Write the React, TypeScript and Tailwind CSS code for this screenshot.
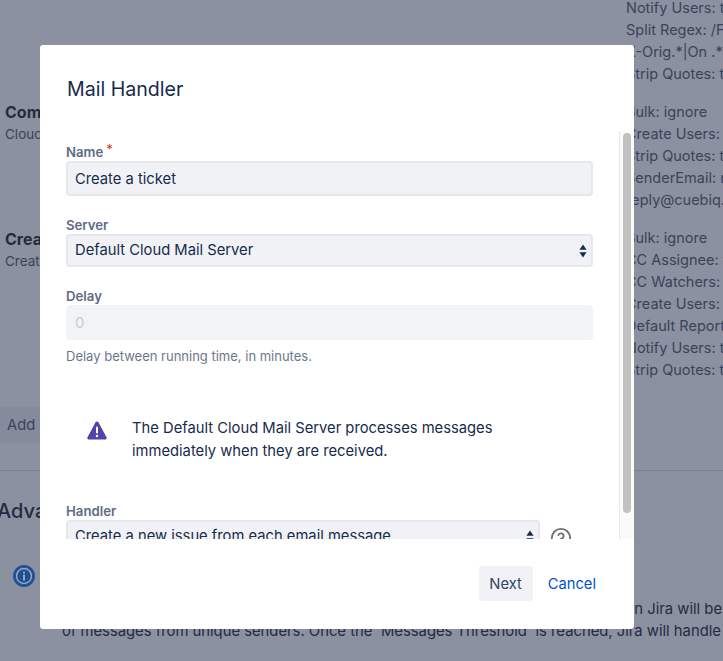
import { CircleHelp } from "lucide-react";

const fontClass = "font-['Inter','Noto_Sans',sans-serif]";

function SelectArrows() {
  return (
    <svg width="8" height="14" viewBox="0 0 8 14" className="pointer-events-none text-[#172b4d]">
      <path d="M4 0.5 L7.6 5.8 H0.4 Z" fill="currentColor" />
      <path d="M4 13.5 L7.6 8.2 H0.4 Z" fill="currentColor" />
    </svg>
  );
}

function WarningIcon() {
  return (
    <svg width="20" height="19" viewBox="0 0 20 19">
      <path
        d="M8.6 1.2 L0.5 16.2 C-0.1 17.4 0.6 18.6 1.9 18.6 H18.1 C19.4 18.6 20.1 17.4 19.5 16.2 L11.4 1.2 C10.8 0.1 9.2 0.1 8.6 1.2 Z"
        fill="#5243aa"
      />
      <rect x="9" y="5.5" width="2" height="7" rx="1" fill="#fff" />
      <circle cx="10" cy="15" r="1.2" fill="#fff" />
    </svg>
  );
}

function InfoIcon() {
  return (
    <svg width="22" height="22" viewBox="0 0 22 22">
      <circle cx="11" cy="11" r="11" fill="#1f5192" />
      <circle cx="11" cy="11" r="7.5" fill="none" stroke="#9aa6bd" strokeWidth="1.5" />
      <rect x="10" y="9.5" width="2" height="6" fill="#9aa6bd" />
      <circle cx="11" cy="7.5" r="1.1" fill="#9aa6bd" />
    </svg>
  );
}

const rightGroups = [
  ["Notify Users: true", "Split Regex: /From:", "X-Orig.*|On .*(wrote)", "Strip Quotes: true"],
  ["Bulk: ignore", "Create Users: true", "Strip Quotes: true", "SenderEmail: no-", "reply@cuebiq.com"],
  [
    "Bulk: ignore",
    "CC Assignee: true",
    "CC Watchers: true",
    "Create Users: true",
    "Default Reporter: x",
    "Notify Users: true",
    "Strip Quotes: true",
  ],
];

function Background() {
  return (
    <div className="flex h-full flex-col text-[#3b4357]">
      <div className="flex h-[471px] shrink-0 justify-between border-b border-[#7a8195]">
        <div className="flex flex-col pl-[5px] pt-[101px] text-[13.5px] leading-[22px]">
          <div className="text-[16px] font-bold text-[#232b40]">Comment</div>
          <div>Cloud</div>
          <div className="mt-[83px] text-[16px] font-bold text-[#232b40]">Create</div>
          <div>Create</div>
          <div className="-ml-[5px] mt-[135px] h-[36px] w-[100px] overflow-hidden whitespace-nowrap rounded-[3px] bg-[#858b9d] pl-[7px] text-[14.75px] leading-[36px]">
            Add incoming
          </div>
        </div>
        <div className="-mt-[3px] flex w-[97px] flex-col gap-4 overflow-hidden whitespace-nowrap text-[14.5px] leading-[22px]">
          {rightGroups.map((group, i) => (
            <div key={i}>
              {group.map((line, j) => (
                <div key={j}>{line}</div>
              ))}
            </div>
          ))}
        </div>
      </div>
      <div className="-ml-[3px] mt-[25px] text-[20px] font-medium leading-[30px] text-[#232b40]">Advanced</div>
      <div className="mt-[39px] pl-[13px]">
        <InfoIcon />
      </div>
      <div className="mt-[11px] whitespace-nowrap pl-[62px] text-[14.8px] leading-[22px] text-[#232b40]">
        <p>To prevent mail loops, the number of emails received from any one single sender in Jira will be processed</p>
        <p>of messages from unique senders. Once the 'Messages Threshold' is reached, Jira will handle the</p>
      </div>
    </div>
  );
}

function Label({ children }: { children: React.ReactNode }) {
  return <div className="text-[13.2px] font-semibold leading-[16px] text-[#5e6c84]">{children}</div>;
}

const fieldClass =
  "w-full rounded-[4px] border-2 border-[#e6e7ec] bg-[#f1f2f6] px-[7px] text-[14.75px] text-[#172b4d] outline-none";

function Modal() {
  return (
    <div className="absolute left-[40px] top-[45px] flex h-[584px] w-[594px] flex-col rounded-[3px] bg-white">
      <div className="h-[86px] shrink-0 pl-[27px] pt-[29px] text-[19.6px] font-normal leading-[30px] text-[#172b4d]">
        Mail Handler
      </div>
      <div className="flex min-h-0 flex-1">
        <div className="min-w-0 flex-1 overflow-hidden pl-[26px] pr-[26px]">
          <div className="flex items-start pt-[13px]">
            <Label>Name</Label>
            <span className="-mt-[3px] ml-[3px] text-[13px] leading-[16px] text-[#de350b]">*</span>
          </div>
          <input readOnly value="Create a ticket" className={`mt-[1px] block h-[35px] ${fieldClass}`} />

          <div className="mt-[21px]">
            <Label>Server</Label>
          </div>
          <div className="relative mt-[1px]">
            <select className={`block h-[33px] appearance-none ${fieldClass}`}>
              <option>Default Cloud Mail Server</option>
            </select>
            <div className="absolute right-[6px] top-[10px] flex">
              <SelectArrows />
            </div>
          </div>

          <div className="mt-[21px]">
            <Label>Delay</Label>
          </div>
          <input
            readOnly
            value="0"
            className="mt-[1px] block h-[35px] w-full rounded-[4px] bg-[#f2f3f6] px-[9px] text-[14.75px] text-[#c9ccd4] outline-none"
          />
          <div className="mt-[8px] text-[13px] leading-[16px] text-[#6b778c]">
            Delay between running time, in minutes.
          </div>

          <div className="mt-[53px] flex items-start pl-[21px]">
            <div className="flex w-[45px] shrink-0 pt-[4px]">
              <WarningIcon />
            </div>
            <div className="text-[14.75px] leading-[23px] text-[#172b4d]">
              The Default Cloud Mail Server processes messages
              <br />
              immediately when they are received.
            </div>
          </div>

          <div className="mt-[40px]">
            <Label>Handler</Label>
          </div>
          <div className="mt-[1px] flex items-start">
            <div className="relative w-[474px] shrink-0">
              <select className={`block h-[33px] appearance-none ${fieldClass}`}>
                <option>Create a new issue from each email message</option>
              </select>
              <div className="absolute right-[6px] top-[10px] flex">
                <SelectArrows />
              </div>
            </div>
            <CircleHelp className="ml-[10px] mt-[7px] h-[22px] w-[22px] text-[#707070]" strokeWidth={2} />
          </div>
        </div>
        <div className="w-[15px] shrink-0 border-l border-[#e8e8e8] bg-[#fafafa] px-[3px] pt-[2px]">
          <div className="h-[380px] w-[8px] rounded-full bg-[#c1c1c1]" />
        </div>
      </div>
      <div className="flex h-[90px] shrink-0 items-start justify-end pr-[38px] pt-[27px] text-[14.75px]">
        <button className="h-[35px] w-[54px] rounded-[3px] bg-[#f1f2f6] pt-px text-[#344563]">Next</button>
        <button className="ml-[15px] h-[35px] pt-px text-[#0052cc]">Cancel</button>
      </div>
    </div>
  );
}

export default function App() {
  return (
    <div className={`relative h-[661px] w-[723px] overflow-hidden bg-[#8b91a1] ${fontClass}`}>
      <Background />
      <Modal />
    </div>
  );
}
